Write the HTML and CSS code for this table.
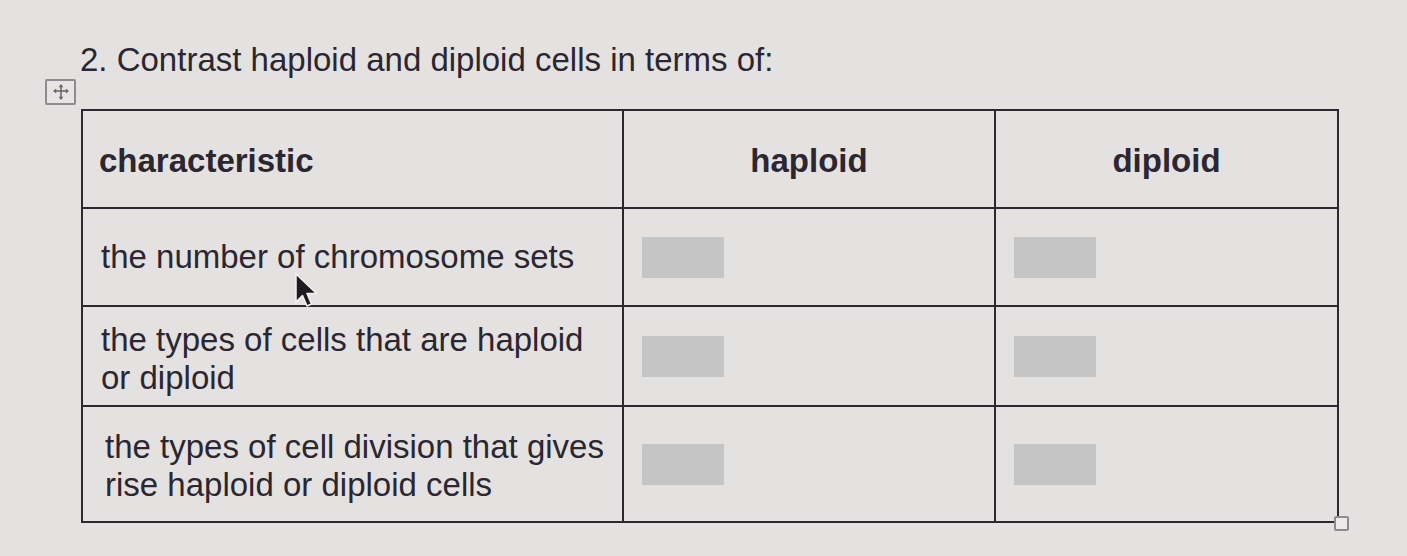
FILE: index.html
```html
<!DOCTYPE html>
<html>
<head>
<meta charset="utf-8">
<link rel="stylesheet" href="styles.css">
</head>
<body>
<div class="page">
  <h2 class="question">2. Contrast haploid and diploid cells in terms of:</h2>
  <div class="handle-row">
    <span class="move-handle">
      <svg width="22" height="18" viewBox="0 0 22 18">
        <g stroke="#6b6770" stroke-width="1.6" fill="none">
          <line x1="11" y1="2" x2="11" y2="16"/>
          <line x1="4" y1="8" x2="18" y2="8"/>
        </g>
        <g fill="#6b6770">
          <polygon points="11,1 8.6,4.2 13.4,4.2"/>
          <polygon points="11,17 8.6,13.8 13.4,13.8"/>
          <polygon points="3,8 6.2,5.6 6.2,10.4"/>
          <polygon points="19,8 15.8,5.6 15.8,10.4"/>
        </g>
      </svg>
    </span>
  </div>
  <div class="table-wrap">
    <table class="grid">
      <colgroup>
        <col class="c1"><col class="c2"><col class="c3">
      </colgroup>
      <tr class="head">
        <th class="left">characteristic</th>
        <th>haploid</th>
        <th>diploid</th>
      </tr>
      <tr class="r1">
        <td>the number of chromosome sets</td>
        <td><span class="blank"></span></td>
        <td><span class="blank"></span></td>
      </tr>
      <tr class="r2">
        <td>the types of cells that are haploid<br>or diploid</td>
        <td><span class="blank"></span></td>
        <td><span class="blank"></span></td>
      </tr>
      <tr class="r3">
        <td>the types of cell division that gives<br>rise haploid or diploid cells</td>
        <td><span class="blank"></span></td>
        <td><span class="blank"></span></td>
      </tr>
    </table>
    <span class="resize-handle"></span>
    <svg class="cursor" width="26" height="38" viewBox="0 0 26 38">
      <path d="M2 1 L2 29 L8.5 22.5 L13 33 L17.5 31 L13 20.5 L22.5 20.5 Z" fill="#1d1a20" stroke="#f2f2f2" stroke-width="1.5" stroke-linejoin="round"/>
    </svg>
  </div>
</div>
</body>
</html>
```
FILE: styles.css
```css
html, body {
  margin: 0;
  padding: 0;
}
body {
  background: #e3e2e0;
  font-family: "Liberation Sans", Arial, sans-serif;
  color: #2b2630;
  width: 1407px;
  height: 556px;
  overflow: hidden;
}
.page {
  padding: 41px 0 0 0;
}
.question {
  margin: 0 0 0 80px;
  font-size: 33px;
  font-weight: normal;
  line-height: 38px;
}
.handle-row {
  display: flex;
  padding-left: 45px;
  margin-top: 0;
  height: 27px;
}
.move-handle {
  box-sizing: border-box;
  width: 31px;
  height: 26px;
  border: 2px solid #8d8a90;
  border-radius: 2px;
  display: flex;
  align-items: center;
  justify-content: center;
  background: #e6e5e3;
}
.table-wrap {
  position: relative;
  margin-left: 81px;
  margin-top: 3px;
  width: 1258px;
}
.grid {
  border-collapse: collapse;
  table-layout: fixed;
  width: 1256px;
}
.c1 { width: 541px; }
.c2 { width: 372px; }
.c3 { width: 343px; }
.grid th, .grid td {
  border: 2px solid #2c2830;
  padding: 0 0 0 18px;
  vertical-align: middle;
  font-size: 33px;
  line-height: 38px;
  text-align: left;
}
.grid th {
  font-weight: bold;
  text-align: center;
  padding: 4px 0 0 0;
}
.grid th.left {
  text-align: left;
  padding-left: 16px;
}
.head { height: 98px; }
.r1 { height: 98px; }
.r2 { height: 100px; }
.r3 { height: 116px; }
.r2 td:first-child { padding-top: 6px; }
.r3 td:first-child { padding-left: 22px; padding-top: 4px; }
.blank {
  display: block;
  width: 82px;
  height: 41px;
  background: #c6c5c5;
}
.resize-handle {
  position: absolute;
  right: -10px;
  bottom: -8px;
  width: 11px;
  height: 11px;
  border: 2px solid #8d8a90;
  border-radius: 2px;
  background: #eceae8;
}
.cursor {
  position: absolute;
  left: 213px;
  top: 164px;
}
```
